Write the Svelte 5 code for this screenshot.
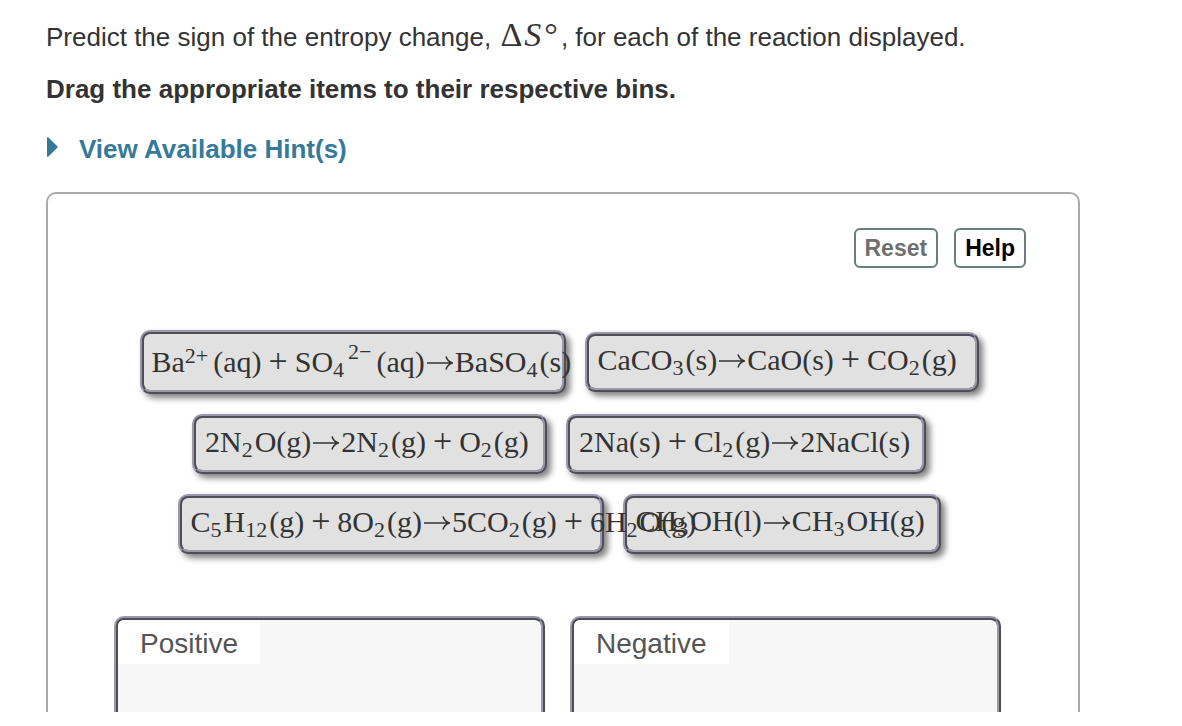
<script>
  const plus = { t: '+', k: 'plus' };
  const arrow = { t: '→', k: 'arrow' };
  const n = (t) => ({ t, k: 'base' });
  const sub = (t) => ({ t, k: 'sub' });
  const sup = (t) => ({ t, k: 'sup' });
  const high = (t) => ({ t, k: 'sup high' });

  const rows = [
    [
      { width: 426, tall: true, parts: [n('Ba'), sup('2+'), n('(aq)'), plus, n('SO'), sub('4'), high('2−'), n('(aq)'), arrow, n('BaSO'), sub('4'), n('(s)')] },
      { width: 394, parts: [n('CaCO'), sub('3'), n('(s)'), arrow, n('CaO(s)'), plus, n('CO'), sub('2'), n('(g)')] }
    ],
    [
      { width: 355, parts: [n('2N'), sub('2'), n('O(g)'), arrow, n('2N'), sub('2'), n('(g)'), plus, n('O'), sub('2'), n('(g)')] },
      { width: 360, parts: [n('2Na(s)'), plus, n('Cl'), sub('2'), n('(g)'), arrow, n('2NaCl(s)')] }
    ],
    [
      { width: 426, parts: [n('C'), sub('5'), n('H'), sub('12'), n('(g)'), plus, n('8O'), sub('2'), n('(g)'), arrow, n('5CO'), sub('2'), n('(g)'), plus, n('6H'), sub('2'), n('O(g)')] },
      { width: 318, parts: [n('CH'), sub('3'), n('OH(l)'), arrow, n('CH'), sub('3'), n('OH(g)')] }
    ]
  ];
  const bins = ['Positive', 'Negative'];
</script>

<main>
  <p class="prompt">Predict the sign of the entropy change, <span class="math">Δ<i>S</i><span class="degree">°</span></span>, for each of the reaction displayed.</p>
  <p class="instruction">Drag the appropriate items to their respective bins.</p>
  <button class="hints" type="button">
    <svg width="12" height="20" viewBox="0 0 12 20" aria-hidden="true"><path d="M1 1Q1 0 2 0L12 10L2 20Q1 20 1 19Z" fill="#367a99" /></svg>
    View Available Hint(s)
  </button>

  <section class="panel">
    <div class="actions">
      <button class="reset" type="button">Reset</button>
      <button type="button">Help</button>
    </div>

    <div class="items">
      {#each rows as row}
        <div class="row" role="list">
          {#each row as item}
            <div class="tile" class:tall={item.tall} style:width="{item.width}px" draggable="true" role="listitem">
              <span class="formula">
                {#each item.parts as p}
                  {#if p.k === 'arrow'}
                    <svg class="arrow" width="26" height="16" viewBox="0 0 26 16" role="img" aria-label="yields"><path d="M0 8H25M19 1.500C20 5 22 7 25.500 8C22 9 20 11 19 14.500" fill="none" stroke="#333" stroke-width="1.500" /></svg>
                  {:else}
                    <span class={p.k}>{p.t}</span>
                  {/if}
                {/each}
              </span>
            </div>
          {/each}
        </div>
      {/each}
    </div>

    <div class="bins">
      {#each bins as bin}
        <div class="bin"><h2>{bin}</h2></div>
      {/each}
    </div>
  </section>
</main>

<style>
  :global(body) {
    margin: 0;
    background: #fff;
  }
  main {
    box-sizing: border-box;
    display: flex;
    flex-direction: column;
    align-items: flex-start;
    height: calc(100vh - 14px);
    padding: 21px 102px 0 46px;
    overflow: hidden;
    color: #333;
    font-family: "Liberation Sans", Helvetica, Arial, sans-serif;
    font-size: 26px;
    line-height: 32px;
  }
  p {
    margin: 0 0 20px;
    white-space: nowrap;
  }
  .instruction {
    font-weight: bold;
    margin-bottom: 28px;
  }
  .math {
    font-family: "Liberation Serif", serif;
    font-size: 34px;
    line-height: 0;
    margin: 0 3px 0 2px;
  }
  .math i {
    margin: 0 3px 0 2px;
  }
  button {
    font-family: inherit;
    font-weight: bold;
    cursor: pointer;
  }
  .hints {
    display: flex;
    align-items: center;
    gap: 21px;
    padding: 0;
    border: 0;
    background: none;
    color: #367a99;
    font-size: 26px;
    line-height: 32px;
  }
  .hints svg {
    margin-bottom: 4px;
  }
  .panel {
    box-sizing: border-box;
    flex: 1 0 auto;
    width: 100%;
    margin-top: 27px;
    padding: 34px 52px 0 66px;
    border: 2px solid #aaa;
    border-bottom: 0;
    border-radius: 10px 10px 0 0;
  }
  .actions {
    display: flex;
    justify-content: flex-end;
    gap: 16px;
  }
  .actions button {
    box-sizing: border-box;
    height: 40px;
    padding: 0 9px;
    border: 2px solid #6c7b80;
    border-radius: 6px;
    background: #fff;
    color: #000;
    font-size: 23px;
    line-height: 28px;
  }
  .actions .reset {
    color: #6f6f6f;
  }
  .items {
    display: flex;
    flex-direction: column;
    gap: 20px;
    margin-top: 62px;
  }
  .row {
    display: flex;
    justify-content: center;
    align-items: center;
    gap: 19px;
    padding-right: 22px;
  }
  .tile {
    box-sizing: border-box;
    flex: none;
    height: 60px;
    padding: 7px 9px;
    border: 4px ridge #9999ab;
    border-radius: 10px;
    background: #e1e1e1;
    box-shadow: 4px 4px 6px rgba(0, 0, 0, 0.5);
    cursor: grab;
  }
  .tall {
    height: 64px;
    padding: 11px 8px;
  }
  .formula {
    position: relative;
    z-index: 1;
    display: flex;
    align-items: baseline;
    font-family: "Liberation Serif", serif;
    font-size: 30px;
    line-height: 32px;
    white-space: nowrap;
  }
  .sub,
  .sup {
    position: relative;
    font-size: 22px;
    margin-right: 2px;
  }
  .sub {
    top: 5px;
  }
  .sup {
    top: -9px;
    margin-right: 5px;
  }
  .high {
    top: -13px;
    margin-left: 2px;
  }
  .plus {
    margin: 0 7px;
    font-size: 34px;
  }
  .arrow {
    flex: none;
    align-self: center;
    margin: 0 2px;
  }
  .bins {
    display: flex;
    gap: 25px;
    min-height: 200px;
    margin-top: 62px;
    padding-right: 25px;
  }
  .bin {
    flex: 1;
    border: 4px ridge #9999ab;
    border-radius: 10px;
    background: #f7f7f7;
  }
  h2 {
    display: inline-block;
    margin: 0;
    padding: 8px 22px 4px;
    background: #fff;
    border-top-left-radius: 6px;
    color: #555;
    font-size: 28px;
    font-weight: normal;
    line-height: 32px;
  }
</style>
